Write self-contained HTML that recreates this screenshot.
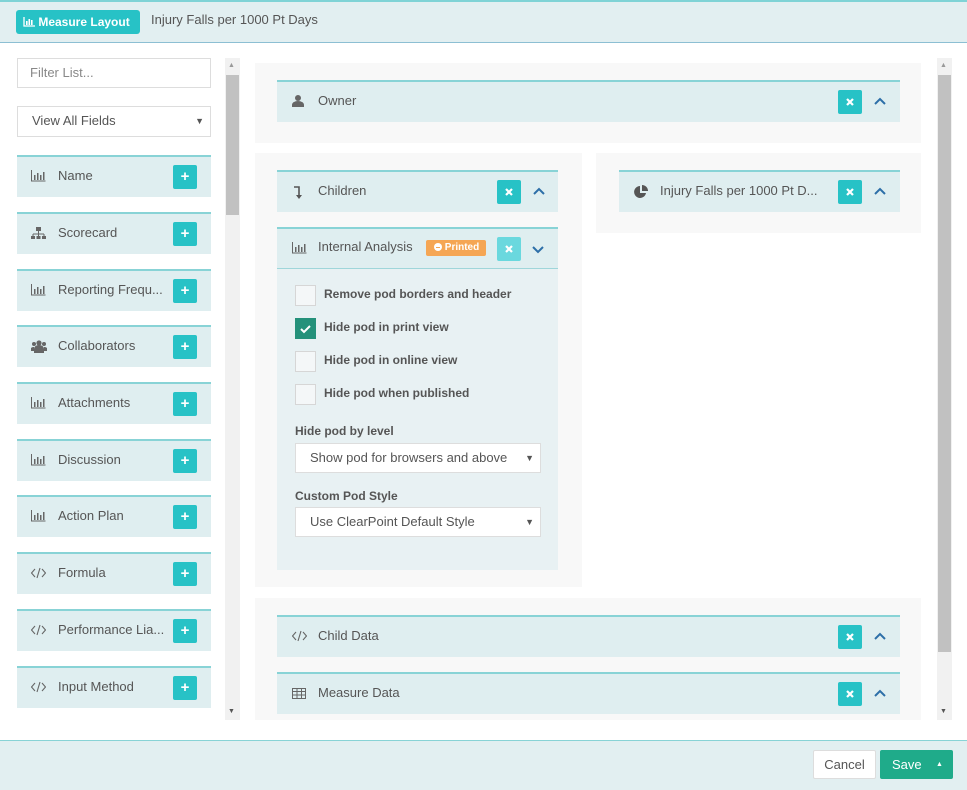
<!DOCTYPE html>
<html><head><meta charset="utf-8"><style>
*{box-sizing:border-box;margin:0;padding:0}
body{width:967px;height:790px;position:relative;overflow:hidden;background:#fff;font-family:"Liberation Sans",sans-serif;font-size:13px;color:#5b6266}
.a{position:absolute}
.hdr{left:0;top:0;width:967px;height:43px;background:#e2eff1;border-top:2px solid #7fd3d6;border-bottom:1px solid #8cbfd3}
.ml{left:16px;top:10px;width:124px;height:24px;background:#27c2c6;color:#fff;border-radius:3px;font-weight:bold;font-size:12px;line-height:24px;padding-left:7px}
.ttl{left:151px;top:12px;font-size:13px;color:#555}
.inp{background:#fff;border:1px solid #ddd;color:#888;font-size:13px;padding-left:12px;line-height:28px}
.item{left:17px;width:194px;height:42px;background:#dfeef0;border-top:2px solid #88d3d6}
.item .t{position:absolute;left:41px;top:11px;font-size:13px;color:#555}
.item .ic{position:absolute;left:14px;top:13px}
.plus{position:absolute;width:24px;height:24px;background:#27c2c6;border-radius:2px;color:#fff;font-weight:bold;text-align:center;line-height:24px;font-size:15px}
.item .plus{left:156px;top:8px}
.sb{background:#f1f1f1}
.th{background:#c1c1c1}
.box{background:#f8f8f8}
.pod{height:42px;background:#dfeef0;border-top:2px solid #88d3d6}
.pod .t{position:absolute;left:41px;top:11px;color:#555}
.pod .ic{position:absolute;left:15px;top:13px}
.x{position:absolute;width:24px;height:24px;background:#27c2c6;border-radius:2px;top:8px}
.x svg{position:absolute;left:7px;top:7px}
.car{position:absolute;top:15px}
.cb{width:21px;height:21px;border:1px solid #d6d6d6;background:#f4f7f8}
.lbl{font-weight:bold;font-size:12px;color:#555}
.sel{background:#fff;border:1px solid #ddd;height:30px;color:#555;padding-left:14px;line-height:28px;font-size:13px}
.arr{position:absolute;right:6px;top:0;font-size:9px;color:#555}
</style></head><body>
<div class="a hdr"></div>
<div class="a ml"><svg width="12" height="10" style="vertical-align:-1px"><path d="M1 0v9h11" stroke="#fff" fill="none" stroke-width="1.3"/><rect x="3" y="4" width="1.6" height="4" fill="#fff"/><rect x="5.5" y="2" width="1.6" height="6" fill="#fff"/><rect x="8" y="3" width="1.6" height="5" fill="#fff"/></svg> Measure Layout</div>
<div class="a ttl">Injury Falls per 1000 Pt Days</div>

<div class="a inp" style="left:17px;top:58px;width:194px;height:30px">Filter List...</div>
<div class="a inp" style="left:17px;top:106px;width:194px;height:31px;color:#555;padding-left:14px">View All Fields<span class="arr" style="top:0">▼</span></div>

<svg width="0" height="0" style="position:absolute"><defs>
<g id="bar"><path d="M0.5 0v11h14" stroke="#666" fill="none" stroke-width="1"/><rect x="3" y="5" width="1.5" height="5" fill="#666"/><rect x="6" y="3" width="1.5" height="7" fill="#666"/><rect x="9" y="5" width="1.5" height="5" fill="#666"/><rect x="12" y="2" width="1.5" height="8" fill="#666"/></g>
<g id="code"><path d="M4 2L0.5 6 4 10M11 2l3.5 4L11 10M9 1L6 11" stroke="#666" fill="none" stroke-width="1.1"/></g>
</defs></svg>

<div class="a item" style="top:155px"><svg class="ic" width="15" height="12"><use href="#bar"/></svg><span class="t">Name</span><div class="plus">+</div></div>
<div class="a item" style="top:212px"><svg class="ic" width="15" height="12"><rect x="5" y="0" width="5" height="4" fill="#666"/><path d="M7.5 4v3M2 7h11M2 7v2M13 7v2M7.5 7v2" stroke="#666" fill="none"/><rect x="0" y="9" width="4" height="3" fill="#666"/><rect x="5.5" y="9" width="4" height="3" fill="#666"/><rect x="11" y="9" width="4" height="3" fill="#666"/></svg><span class="t">Scorecard</span><div class="plus">+</div></div>
<div class="a item" style="top:269px"><svg class="ic" width="15" height="12"><use href="#bar"/></svg><span class="t">Reporting Frequ...</span><div class="plus">+</div></div>
<div class="a item" style="top:325px"><svg class="ic" width="16" height="13"><circle cx="8" cy="3" r="2.6" fill="#666"/><circle cx="3" cy="4" r="2" fill="#666"/><circle cx="13" cy="4" r="2" fill="#666"/><path d="M3 13v-4a5 4 0 0 1 10 0v4z" fill="#666"/><path d="M0 11v-3a3 2 0 0 1 3-1v4zM16 11v-3a3 2 0 0 0-3-1v4z" fill="#666"/></svg><span class="t">Collaborators</span><div class="plus">+</div></div>
<div class="a item" style="top:382px"><svg class="ic" width="15" height="12"><use href="#bar"/></svg><span class="t">Attachments</span><div class="plus">+</div></div>
<div class="a item" style="top:439px"><svg class="ic" width="15" height="12"><use href="#bar"/></svg><span class="t">Discussion</span><div class="plus">+</div></div>
<div class="a item" style="top:495px"><svg class="ic" width="15" height="12"><use href="#bar"/></svg><span class="t">Action Plan</span><div class="plus">+</div></div>
<div class="a item" style="top:552px"><svg class="ic" width="15" height="12"><use href="#code"/></svg><span class="t">Formula</span><div class="plus">+</div></div>
<div class="a item" style="top:609px"><svg class="ic" width="15" height="12"><use href="#code"/></svg><span class="t">Performance Lia...</span><div class="plus">+</div></div>
<div class="a item" style="top:666px"><svg class="ic" width="15" height="12"><use href="#code"/></svg><span class="t">Input Method</span><div class="plus">+</div></div>

<div class="a sb" style="left:225px;top:58px;width:15px;height:662px"></div>
<div class="a th" style="left:226px;top:75px;width:13px;height:140px"></div>
<div class="a" style="left:228px;top:62px;font-size:7px;color:#999">▲</div>
<div class="a" style="left:228px;top:708px;font-size:7px;color:#555">▼</div>
<div class="a sb" style="left:937px;top:58px;width:15px;height:662px"></div>
<div class="a th" style="left:938px;top:75px;width:13px;height:577px"></div>
<div class="a" style="left:940px;top:62px;font-size:7px;color:#999">▲</div>
<div class="a" style="left:940px;top:708px;font-size:7px;color:#555">▼</div>

<div class="a box" style="left:255px;top:63px;width:666px;height:80px"></div>
<div class="a pod" style="left:277px;top:80px;width:623px"><svg class="ic" width="12" height="12"><circle cx="6" cy="3" r="3" fill="#666"/><path d="M0 12v-2a6 4 0 0 1 12 0v2z" fill="#666"/></svg><span class="t">Owner</span>
<div class="x" style="left:561px"><svg width="10" height="10"><path d="M2 2l6 6M8 2l-6 6" stroke="#fff" stroke-width="2.2"/></svg></div>
<svg class="car" style="left:597px" width="12" height="8"><path d="M1 7l5-5 5 5" stroke="#2d6fa8" fill="none" stroke-width="2"/></svg></div>

<div class="a box" style="left:255px;top:153px;width:327px;height:434px"></div>
<div class="a pod" style="left:277px;top:170px;width:281px"><svg class="ic" width="12" height="14" style="top:14px"><path d="M2 1h5v10" stroke="#555" fill="none" stroke-width="1.6"/><path d="M4 9l3 4 3-4z" fill="#555"/></svg><span class="t">Children</span>
<div class="x" style="left:220px"><svg width="10" height="10"><path d="M2 2l6 6M8 2l-6 6" stroke="#fff" stroke-width="2.2"/></svg></div>
<svg class="car" style="left:256px" width="12" height="8"><path d="M1 7l5-5 5 5" stroke="#2d6fa8" fill="none" stroke-width="2"/></svg></div>

<div class="a" style="left:277px;top:227px;width:281px;height:343px;background:#e8f1f3;border-top:2px solid #88d3d6"></div>
<div class="a" style="left:277px;top:229px;width:281px;height:40px;background:#dfeef0;border-bottom:1px solid #9fd6da"></div>
<svg class="a" style="left:292px;top:242px" width="15" height="12"><use href="#bar"/></svg>
<div class="a" style="left:318px;top:239px;color:#555">Internal Analysis</div>
<div class="a" style="left:426px;top:240px;width:60px;height:16px;background:#f5a654;border-radius:2px;color:#fff;font-size:10px;font-weight:bold;line-height:16px;padding-left:8px"><span style="display:inline-block;width:8px;height:8px;border-radius:50%;background:#fff;vertical-align:-1px;position:relative"><span style="position:absolute;left:2px;top:3.5px;width:4px;height:1px;background:#f5a654"></span></span> Printed</div>
<div class="a x" style="left:497px;top:237px;background:#6ad8de"><svg width="10" height="10"><path d="M2 2l6 6M8 2l-6 6" stroke="#fff" stroke-width="2.2"/></svg></div>
<svg class="a" style="left:532px;top:246px" width="12" height="8"><path d="M1 1l5 5 5-5" stroke="#2d6fa8" fill="none" stroke-width="2"/></svg>

<div class="a cb" style="left:295px;top:285px"></div><div class="a lbl" style="left:324px;top:287px">Remove pod borders and header</div>
<div class="a cb" style="left:295px;top:318px;background:#24917a;border-color:#24917a"><svg width="19" height="19"><path d="M5 10l3 3 6-6" stroke="#fff" fill="none" stroke-width="2"/></svg></div><div class="a lbl" style="left:324px;top:320px">Hide pod in print view</div>
<div class="a cb" style="left:295px;top:351px"></div><div class="a lbl" style="left:324px;top:353px">Hide pod in online view</div>
<div class="a cb" style="left:295px;top:384px"></div><div class="a lbl" style="left:324px;top:386px">Hide pod when published</div>
<div class="a lbl" style="left:295px;top:424px">Hide pod by level</div>
<div class="a sel" style="left:295px;top:443px;width:246px">Show pod for browsers and above<span class="arr">▼</span></div>
<div class="a lbl" style="left:295px;top:489px">Custom Pod Style</div>
<div class="a sel" style="left:295px;top:507px;width:246px">Use ClearPoint Default Style<span class="arr">▼</span></div>

<div class="a box" style="left:596px;top:153px;width:325px;height:80px"></div>
<div class="a pod" style="left:619px;top:170px;width:281px"><svg class="ic" width="14" height="14"><path d="M6 1a6 6 0 1 0 6 7H6z" fill="#555"/><path d="M8 0v6h6a6 6 0 0 0-6-6z" fill="#555"/></svg><span class="t">Injury Falls per 1000 Pt D...</span>
<div class="x" style="left:219px"><svg width="10" height="10"><path d="M2 2l6 6M8 2l-6 6" stroke="#fff" stroke-width="2.2"/></svg></div>
<svg class="car" style="left:255px" width="12" height="8"><path d="M1 7l5-5 5 5" stroke="#2d6fa8" fill="none" stroke-width="2"/></svg></div>

<div class="a box" style="left:255px;top:598px;width:666px;height:122px"></div>
<div class="a pod" style="left:277px;top:615px;width:623px"><svg class="ic" width="15" height="12"><use href="#code"/></svg><span class="t">Child Data</span>
<div class="x" style="left:561px"><svg width="10" height="10"><path d="M2 2l6 6M8 2l-6 6" stroke="#fff" stroke-width="2.2"/></svg></div>
<svg class="car" style="left:597px" width="12" height="8"><path d="M1 7l5-5 5 5" stroke="#2d6fa8" fill="none" stroke-width="2"/></svg></div>
<div class="a pod" style="left:277px;top:672px;width:623px"><svg class="ic" width="14" height="11" style="top:14px"><path d="M0.5 0.5h13v10h-13zM0.5 3.5h13M0.5 7h13M5 0.5v10M9.5 0.5v10" stroke="#666" fill="none"/></svg><span class="t">Measure Data</span>
<div class="x" style="left:561px"><svg width="10" height="10"><path d="M2 2l6 6M8 2l-6 6" stroke="#fff" stroke-width="2.2"/></svg></div>
<svg class="car" style="left:597px" width="12" height="8"><path d="M1 7l5-5 5 5" stroke="#2d6fa8" fill="none" stroke-width="2"/></svg></div>

<div class="a" style="left:0;top:740px;width:967px;height:50px;background:#e2eff1;border-top:1px solid #88d3d6"></div>
<div class="a" style="left:813px;top:750px;width:63px;height:29px;background:#fff;border:1px solid #ddd;border-radius:2px;text-align:center;line-height:27px;color:#555">Cancel</div>
<div class="a" style="left:880px;top:750px;width:73px;height:29px;background:#1fab8a;border-radius:2px;color:#fff;line-height:29px;padding-left:12px">Save<span style="position:absolute;left:56px;top:0;font-size:7px">▲</span></div>
</body></html>
